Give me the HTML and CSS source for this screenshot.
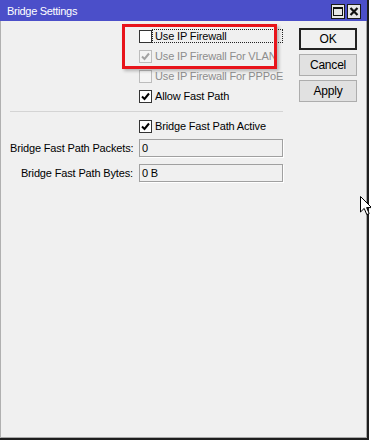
FILE: index.html
```html
<!DOCTYPE html>
<html>
<head>
<meta charset="utf-8">
<link rel="stylesheet" href="styles.css">
</head>
<body>
<div class="window">
  <div class="titlebar">
    <span class="title">Bridge Settings</span>
    <div class="tbtns">
      <span class="tbtn"><svg width="12" height="11" viewBox="0 0 12 11"><rect x="1.5" y="1.5" width="9" height="8" fill="none" stroke="#111" stroke-width="1"/><rect x="1" y="1" width="10" height="2" fill="#111"/></svg></span>
      <span class="tbtn"><svg width="12" height="11" viewBox="0 0 12 11"><path d="M2.5 2 L9.5 9 M9.5 2 L2.5 9" stroke="#111" stroke-width="2.2"/></svg></span>
    </div>
  </div>
  <div class="body">
    <div class="form">
      <div class="cbrow">
        <span class="cb"></span>
        <span class="cblabel focus">Use IP Firewall</span>
      </div>
      <div class="cbrow disabled">
        <span class="cb checked"><svg width="11" height="11" viewBox="0 0 11 11"><polyline points="2,5.5 4.5,8 9,2.5" fill="none" stroke="#a3a3a3" stroke-width="2"/></svg></span>
        <span class="cblabel">Use IP Firewall For VLAN</span>
      </div>
      <div class="cbrow disabled">
        <span class="cb"></span>
        <span class="cblabel">Use IP Firewall For PPPoE</span>
      </div>
      <div class="cbrow">
        <span class="cb"><svg width="11" height="11" viewBox="0 0 11 11"><polyline points="2,5.5 4.5,8 9,2.5" fill="none" stroke="#000" stroke-width="2"/></svg></span>
        <span class="cblabel">Allow Fast Path</span>
      </div>
      <div class="sep"></div>
      <div class="cbrow second">
        <span class="cb"><svg width="11" height="11" viewBox="0 0 11 11"><polyline points="2,5.5 4.5,8 9,2.5" fill="none" stroke="#000" stroke-width="2"/></svg></span>
        <span class="cblabel">Bridge Fast Path Active</span>
      </div>
      <label class="flabel first">Bridge Fast Path Packets:</label>
      <div class="input first">0</div>
      <label class="flabel">Bridge Fast Path Bytes:</label>
      <div class="input">0 B</div>
    </div>
    <div class="side">
      <button class="btn default">OK</button>
      <button class="btn">Cancel</button>
      <button class="btn">Apply</button>
    </div>
  </div>
  <div class="highlight"></div>
  <svg class="cursor" width="13" height="20" viewBox="0 0 13 20"><path d="M0.5 0.5 L0.5 16 L4.2 12.4 L6.8 18.6 L9.2 17.6 L6.6 11.6 L11.6 11.6 Z" fill="#fff" stroke="#000" stroke-width="1"/></svg>
</div>
</body>
</html>
```
FILE: styles.css
```css
html, body {
  margin: 0;
  padding: 0;
  background: #ffffff;
}
body {
  font-family: "Liberation Sans", Arial, sans-serif;
  font-size: 11px;
  letter-spacing: -0.15px;
  color: #000;
}
.window {
  position: relative;
  width: 369px;
  height: 440px;
  box-sizing: border-box;
  background: #f0f0f0;
  border-right: 2px solid #1e1e1e;
  border-bottom: 2px solid #1e1e1e;
  box-shadow: inset -1px -1px 0 #a8a8a8;
  display: flex;
  flex-direction: column;
}
.titlebar {
  height: 21px;
  background: #4b4fc9;
  display: flex;
  align-items: center;
  justify-content: space-between;
  padding: 0 6px 0 7px;
  flex: none;
}
.title {
  color: #fff;
  font-size: 11px;
  letter-spacing: -0.3px;
  padding-top: 1px;
}
.tbtns {
  display: flex;
  gap: 2px;
  align-self: flex-start;
  margin-top: 4px;
}
.tbtn {
  width: 12px;
  height: 13px;
  border: 1px solid #1a1a1a;
  background: #e6e6e6;
  display: flex;
  align-items: center;
  justify-content: center;
}
.body {
  flex: 1;
  display: flex;
  border-left: 1px solid #b0b0b0;
}
.form {
  margin-left: 9px;
  padding-top: 5px;
  display: grid;
  grid-template-columns: 123px 144px;
  column-gap: 6px;
  align-content: start;
}
.cbrow {
  grid-column: 2;
  height: 20px;
  display: flex;
  align-items: center;
  white-space: nowrap;
}
.cbrow.second {
  margin-top: 4px;
}
.cb {
  width: 11px;
  height: 11px;
  border: 1px solid #333;
  background: #fff;
  flex: none;
  display: flex;
}
.disabled .cb {
  border-color: #bcbcbc;
  background: #f4f4f4;
}
.disabled .cblabel {
  color: #8d8d8d;
}
.cblabel {
  margin-left: 0;
  padding: 0 2px;
  height: 12px;
  line-height: 12px;
  border: 1px solid transparent;
  flex: 1;
}
.cblabel.focus {
  border: 1px dotted #222;
}
.sep {
  grid-column: 1 / 3;
  height: 1px;
  background: #d4d4d4;
  margin-top: 5px;
}
.flabel {
  grid-column: 1;
  text-align: right;
  white-space: nowrap;
  height: 18px;
  line-height: 18px;
  margin-top: 7px;
}
.input {
  grid-column: 2;
  height: 16px;
  line-height: 16px;
  border: 1px solid #a0a0a0;
  box-shadow: 1px 1px 0 #fff;
  padding-left: 2px;
  margin-top: 7px;
}
.flabel.first, .input.first {
  margin-top: 3px;
}
.side {
  margin-left: 16px;
  padding-top: 7px;
  display: flex;
  flex-direction: column;
  gap: 4px;
}
.btn {
  width: 58px;
  height: 22px;
  font-family: "Liberation Sans", Arial, sans-serif;
  font-size: 12px;
  letter-spacing: -0.2px;
  background: #e1e1e1;
  border: 1px solid #adadad;
  padding: 0;
  color: #000;
}
.btn.default {
  background: #f0f0f0;
  border: 2px solid #222;
}
.highlight {
  position: absolute;
  left: 122px;
  top: 24px;
  width: 149px;
  height: 39px;
  border: 3px solid #e8141b;
  box-shadow: 2px 2px 3px rgba(0,0,0,0.25);
}
.cursor {
  position: absolute;
  left: 360px;
  top: 196px;
}
```
